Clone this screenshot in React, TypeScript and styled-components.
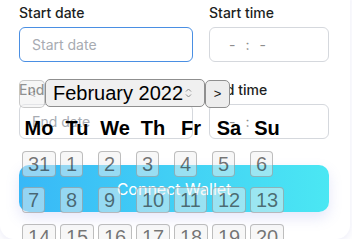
import React from 'react';
import styled, { createGlobalStyle } from 'styled-components';

const GlobalStyle = createGlobalStyle`
  html, body {
    margin: 0;
    padding: 0;
    background: #ffffff;
    overflow: hidden;
  }
  body {
    font-family: Inter, "Noto Sans", sans-serif;
  }
`;

const Card = styled.div`
  position: relative;
  box-sizing: border-box;
  width: 350px;
  margin-top: -16px;
  padding: 19px 21px 27px 19px;
  background: #ffffff;
  border-radius: 14px;
  box-shadow: 0 2px 10px rgba(110, 110, 200, 0.14);
`;

const FieldRow = styled.div`
  display: grid;
  grid-template-columns: 174px 120px;
  column-gap: 16px;

  & + & {
    margin-top: 18px;
  }
`;

const Field = styled.div`
  display: flex;
  flex-direction: column;
`;

const Label = styled.label`
  font-size: 14px;
  line-height: 20px;
  font-weight: 500;
  color: #1d1f23;
  margin-bottom: 4px;
`;

const TextInput = styled.input<{ $focused?: boolean }>`
  box-sizing: border-box;
  width: 100%;
  height: 35px;
  padding: 0 12px;
  border: 1px solid ${p => (p.$focused ? '#4a8fe3' : '#d5d8dd')};
  border-radius: 6px;
  background: #ffffff;
  font: 400 14px Inter, sans-serif;
  color: #222;
  outline: none;

  &::placeholder {
    color: #a7abb2;
  }
`;

const TimeBox = styled.div`
  box-sizing: border-box;
  height: 35px;
  display: flex;
  align-items: center;
  gap: 10px;
  padding: 0 19px;
  border: 1px solid #d5d8dd;
  border-radius: 6px;
  background: #ffffff;
  font: 400 14px Inter, sans-serif;
  color: #8e8e8e;
`;

const ConnectButton = styled.button`
  display: block;
  width: 100%;
  height: 47px;
  margin-top: 26px;
  border: none;
  border-radius: 10px;
  background: linear-gradient(90deg, #38b8f7 0%, #4be7f3 100%);
  color: #ffffff;
  font: 400 16px Inter, sans-serif;
  box-shadow: 0 6px 14px rgba(110, 120, 230, 0.18);
`;

/* the date picker popover, drawn unstyled over the form */
const Popover = styled.div`
  position: absolute;
  left: 19px;
  top: 95px;
  font-family: "Liberation Sans", Arial, sans-serif;
  color: #000;
`;

const NavRow = styled.div`
  display: flex;
  align-items: flex-start;
`;

const NavButton = styled.button<{ disabled?: boolean }>`
  box-sizing: border-box;
  width: ${p => (p.disabled ? '26px' : '25px')};
  height: 28px;
  margin-top: 1px;
  padding: 0;
  border: 1px solid ${p => (p.disabled ? 'rgba(118,118,118,0.35)' : '#8f8f8f')};
  border-radius: 5px;
  background: ${p => (p.disabled ? 'rgba(239,239,239,0.55)' : '#ededed')};
  color: ${p => (p.disabled ? 'rgba(16,16,16,0.3)' : '#111')};
  font: 400 13px "Liberation Sans", Arial, sans-serif;
  line-height: 26px;
`;

const MonthSelect = styled.div`
  box-sizing: border-box;
  width: 160px;
  height: 28px;
  display: flex;
  align-items: center;
  justify-content: space-between;
  padding: 0 12px 0 7px;
  border: 1px solid #8f8f8f;
  border-radius: 5px;
  background: #f0f0f0;
  font-size: 20px;
  line-height: 26px;
`;

const DayGrid = styled.div`
  display: grid;
  grid-template-columns: repeat(7, 38px);
  row-gap: 10.5px;
  margin: 9px 0 0 1px;
`;

const WeekDay = styled.div`
  text-align: center;
  font-size: 20px;
  font-weight: 700;
  line-height: 23px;
`;

const DayButton = styled.button`
  justify-self: start;
  box-sizing: border-box;
  height: 26px;
  margin-left: 2px;
  padding: 0 5px;
  border: 1px solid rgba(118, 118, 118, 0.45);
  border-radius: 4px;
  background: rgba(239, 239, 239, 0.5);
  color: rgba(16, 16, 16, 0.58);
  font: 400 20px "Liberation Sans", Arial, sans-serif;
  line-height: 24px;
`;

const weekDays = ['Mo', 'Tu', 'We', 'Th', 'Fr', 'Sa', 'Su'];
const days = [31, ...Array.from({ length: 28 }, (_, i) => i + 1), 1, 2, 3, 4, 5, 6];

const SelectArrows = () => (
  <svg width="7" height="12" viewBox="0 0 7 12" fill="none" stroke="#8a8a8a" strokeWidth="1">
    <path d="M1 4.5 L3.5 2 L6 4.5" />
    <path d="M1 7.5 L3.5 10 L6 7.5" />
  </svg>
);

const TimeValue = () => (
  <>
    <span>-</span>
    <span>:</span>
    <span>-</span>
  </>
);

export default function App() {
  return (
    <>
      <GlobalStyle />
      <Card>
        <FieldRow>
          <Field>
            <Label>Start date</Label>
            <TextInput $focused placeholder="Start date" readOnly />
          </Field>
          <Field>
            <Label>Start time</Label>
            <TimeBox>
              <TimeValue />
            </TimeBox>
          </Field>
        </FieldRow>
        <FieldRow>
          <Field>
            <Label>End date</Label>
            <TextInput placeholder="End date" readOnly />
          </Field>
          <Field>
            <Label>End time</Label>
            <TimeBox>
              <TimeValue />
            </TimeBox>
          </Field>
        </FieldRow>
        <ConnectButton>Connect Wallet</ConnectButton>

        <Popover>
          <NavRow>
            <NavButton disabled>&lt;</NavButton>
            <MonthSelect>
              <span>February 2022</span>
              <SelectArrows />
            </MonthSelect>
            <NavButton>&gt;</NavButton>
          </NavRow>
          <DayGrid>
            {weekDays.map(d => (
              <WeekDay key={d}>{d}</WeekDay>
            ))}
            {days.map((d, i) => (
              <DayButton key={i} disabled>
                {d}
              </DayButton>
            ))}
          </DayGrid>
        </Popover>
      </Card>
    </>
  );
}
